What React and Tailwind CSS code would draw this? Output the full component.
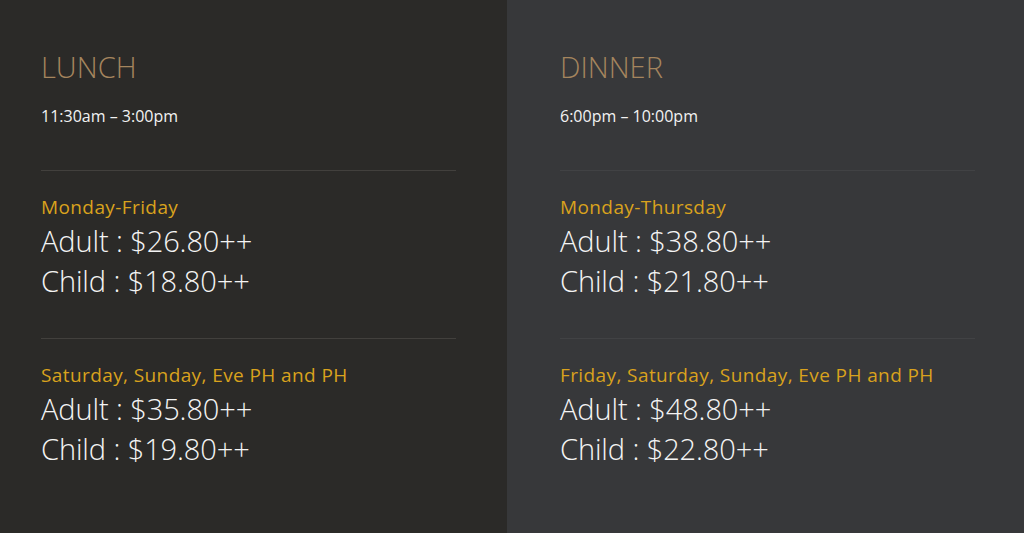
import React from "react";

const sections = [
  {
    title: "LUNCH",
    time: "11:30am – 3:00pm",
    bg: "bg-[#2b2a28]",
    line: "bg-[#42403d]",
    pad: "pl-[41px]",
    groups: [
      { label: "Monday-Friday", adult: "$26.80++", child: "$18.80++" },
      { label: "Saturday, Sunday, Eve PH and PH", adult: "$35.80++", child: "$19.80++" },
    ],
  },
  {
    title: "DINNER",
    time: "6:00pm – 10:00pm",
    bg: "bg-[#37383a]",
    line: "bg-[#414244]",
    pad: "pl-[53px]",
    groups: [
      { label: "Monday-Thursday", adult: "$38.80++", child: "$21.80++" },
      { label: "Friday, Saturday, Sunday, Eve PH and PH", adult: "$48.80++", child: "$22.80++" },
    ],
  },
];

const font = { fontFamily: '"Open Sans", "Noto Sans", sans-serif' };

function Column({ s }) {
  return (
    <div className={`flex-1 h-full ${s.bg} ${s.pad} pt-[49px]`} style={font}>
      <div className="w-[415px]">
        <h2 className="text-[29px] leading-[36px] font-light tracking-[0px] text-[#a5855e]">{s.title}</h2>
        <p className="mt-[21px] text-[16px] leading-[20px] font-medium text-[#f2f2f2]">{s.time}</p>
        {s.groups.map((g, i) => (
          <div key={i}>
            <div className={`h-px ${s.line} ${i === 0 ? "mt-[44px]" : "mt-[37px]"}`} />
            <div className="pt-[22px]">
              <p className="text-[19px] leading-[28px] tracking-[0.4px] text-[#d9a21d]">{g.label}</p>
              <p className="text-[29px] leading-[40px] font-light text-[#f4f4f4] tracking-[-0.1px]">Adult : {g.adult}</p>
              <p className="text-[29px] leading-[40px] font-light text-[#f4f4f4] tracking-[-0.1px]">Child : {g.child}</p>
            </div>
          </div>
        ))}
      </div>
    </div>
  );
}

export default function App() {
  return (
    <div className="flex w-[1024px] h-[533px] overflow-hidden">
      <div className="w-[507px] h-full flex">
        <Column s={sections[0]} />
      </div>
      <div className="w-[517px] h-full flex">
        <Column s={sections[1]} />
      </div>
    </div>
  );
}
